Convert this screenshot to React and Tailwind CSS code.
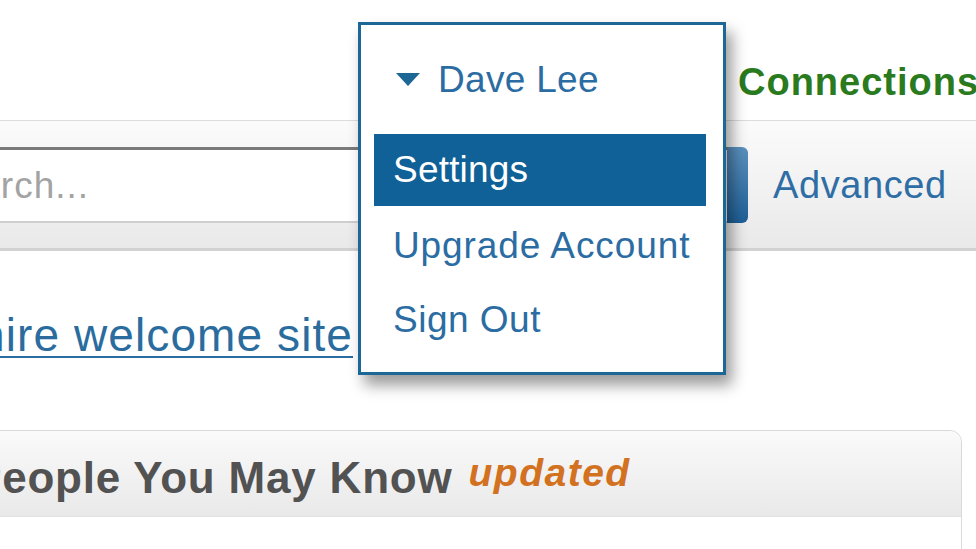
export default function App() {
  return (
    <div className="relative w-[976px] h-[549px] overflow-hidden bg-white font-['Liberation_Sans',Arial,sans-serif]">
      {/* Header */}
      <div className="h-[120px] pt-[60px] pl-[738px] whitespace-nowrap">
        <span className="text-[38px] leading-[44px] font-bold tracking-[1px] text-[#2a7a1e]">Connections</span>
      </div>

      {/* Search toolbar */}
      <div className="h-[131px] border-t border-[#dcdcdc] border-b-[3px] border-b-[#d2d2d2] bg-gradient-to-b from-[#fbfbfb] to-[#e9e9e9] flex items-start pt-[26px]">
        <div className="w-[727px] h-[76px] bg-white border-t-[3px] border-t-[#7a7a7a] border-b-2 border-b-[#cfcfcf] flex items-center overflow-hidden whitespace-nowrap">
          <span className="-ml-[68px] text-[37px] tracking-[1px] text-[#a3a3a3]">Search...</span>
        </div>
        <div className="w-[21px] h-[76px] rounded-r-[6px] bg-gradient-to-b from-[#5a90bd] to-[#1d5f96]" />
        <div className="h-[76px] flex items-center ml-[25px] text-[38px] tracking-[0.6px] text-[#2f6ea5] whitespace-nowrap">
          Advanced
        </div>
      </div>

      {/* Welcome link */}
      <div className="h-[179px] pt-[58px] whitespace-nowrap">
        <a className="-ml-[21px] inline-block text-[46px] leading-[52px] tracking-[1.1px] text-[#2a6c9e] underline decoration-2 underline-offset-[5px]">
          hire welcome site
        </a>
      </div>

      {/* People You May Know panel */}
      <div className="-ml-[10px] w-[972px] h-[200px] rounded-tr-[12px] border border-[#d9d9d9]">
        <div className="h-[86px] pt-[8px] rounded-tr-[12px] bg-gradient-to-b from-[#fafafa] to-[#e9e9e9] border-b border-[#e2e2e2] flex items-center whitespace-nowrap">
          <span className="-ml-[19px] text-[44px] font-bold tracking-[0.8px] text-[#525252]">People You May Know</span>
          <span className="ml-[16px] -mt-[8px] text-[39px] font-bold italic tracking-[1.5px] text-[#d2711f]">updated</span>
        </div>
      </div>

      {/* Account dropdown */}
      <div className="absolute left-[358px] top-[22px] w-[368px] h-[353px] border-[3px] border-[#1d6797] bg-white shadow-[6px_10px_14px_rgba(0,0,0,0.4)]">
        <div className="h-[109px] flex items-center pl-[35px] whitespace-nowrap">
          <svg width="24" height="13" viewBox="0 0 24 13">
            <polygon points="0,0 24,0 12,13" fill="#1d6797" />
          </svg>
          <span className="ml-[18px] text-[37px] tracking-[0.3px] text-[#2b6ca3]">Dave Lee</span>
        </div>
        <div className="ml-[13px] mr-[17px] h-[72px] bg-[#0f6198] flex items-center pl-[19px] text-[37px] tracking-[0.2px] text-white whitespace-nowrap">
          Settings
        </div>
        <div className="h-[78px] pt-[2px] flex items-center pl-[32px] text-[37px] tracking-[0.9px] text-[#2b6ca3] whitespace-nowrap">
          Upgrade Account
        </div>
        <div className="h-[72px] flex items-center pl-[32px] text-[37px] tracking-[0.5px] text-[#2b6ca3] whitespace-nowrap">
          Sign Out
        </div>
      </div>
    </div>
  );
}
